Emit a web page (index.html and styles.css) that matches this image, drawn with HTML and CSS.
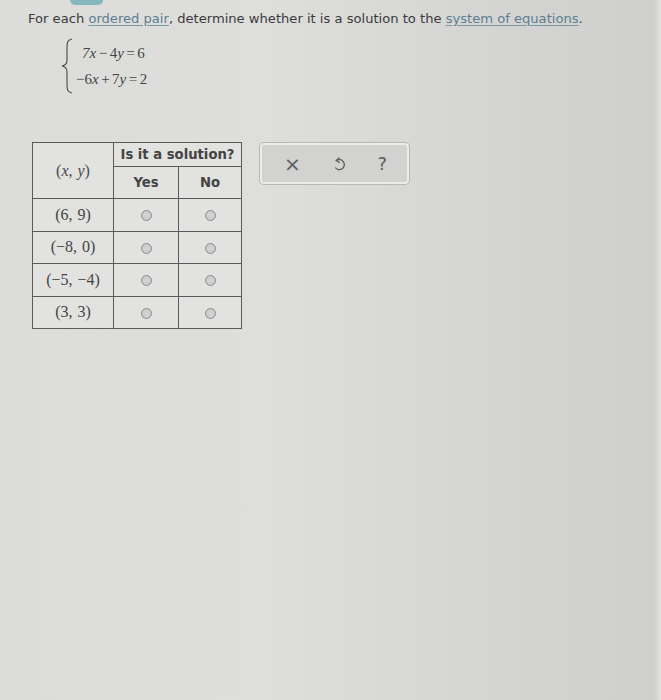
FILE: index.html
```html
<!DOCTYPE html>
<html>
<head>
<meta charset="utf-8">
<link rel="stylesheet" href="styles.css">
</head>
<body>
<div class="page">
  <div class="top-tab"></div>
  <p class="prompt">For each <a class="term">ordered pair</a>, determine whether it is a solution to the <a class="term">system of equations</a>.</p>
  <div class="system">
    <svg class="brace" width="12" height="56" viewBox="0 0 12 56">
      <path d="M11 1 C6 2 6 5 6 10 L6 22 C6 26 4 27.5 1 28 C4 28.5 6 30 6 34 L6 46 C6 51 6 54 11 55" fill="none" stroke="#4a4a4a" stroke-width="1.1"/>
    </svg>
    <div class="eqs">
      <div class="eq eq1"><i>7x</i><span class="op">−</span>4<i>y</i><span class="op">=</span>6</div>
      <div class="eq eq2">−6<i>x</i><span class="op">+</span>7<i>y</i><span class="op">=</span>2</div>
    </div>
  </div>
  <div class="work">
    <table class="grid">
      <tr>
        <th class="pair-head" rowspan="2"><span class="m">(<i>x</i>, <i>y</i>)</span></th>
        <th class="span-head" colspan="2">Is it a solution?</th>
      </tr>
      <tr class="yn">
        <th>Yes</th>
        <th>No</th>
      </tr>
      <tr><td class="m">(6, 9)</td><td><span class="radio"></span></td><td><span class="radio"></span></td></tr>
      <tr><td class="m">(−8, 0)</td><td><span class="radio"></span></td><td><span class="radio"></span></td></tr>
      <tr><td class="m">(−5, −4)</td><td><span class="radio"></span></td><td><span class="radio"></span></td></tr>
      <tr><td class="m">(3, 3)</td><td><span class="radio"></span></td><td><span class="radio"></span></td></tr>
    </table>
    <div class="tools">
      <span class="tool x">×</span>
      <svg class="tool undo" width="14" height="16" viewBox="0 0 14 16">
        <path d="M4.5 4.5 A5 5 0 1 1 3.2 11.5" fill="none" stroke="#5e5e5e" stroke-width="1.3"/>
        <path d="M7.5 1.5 L4.2 4.6 L7.8 6.8" fill="none" stroke="#5e5e5e" stroke-width="1.3"/>
      </svg>
      <span class="tool q">?</span>
    </div>
  </div>
</div>
</body>
</html>
```

FILE: styles.css
```css
html, body {
  margin: 0;
  padding: 0;
}
body {
  width: 661px;
  height: 700px;
  overflow: hidden;
  background: linear-gradient(90deg, #dcdcda 0%, #dededc 40%, #d3d3d1 80%, #cfcfcd 99%, #e2e2e0 100%);
  font-family: "DejaVu Sans", Verdana, sans-serif;
  color: #3b3b3b;
}
.page {
  position: relative;
  height: 700px;
}
.top-tab {
  margin-left: 70px;
  width: 33px;
  height: 5px;
  background: #86b7ba;
  border-radius: 0 0 14px 14px;
}
.prompt {
  margin: 4px 0 0 28px;
  font-size: 13.1px;
  line-height: 20px;
  white-space: nowrap;
}
.term {
  color: #5b7f90;
  text-decoration: underline;
  text-decoration-color: #7a98a6;
  text-underline-offset: 2px;
}
.system {
  display: flex;
  align-items: center;
  margin: 9px 0 0 61px;
  height: 56px;
}
.brace {
  display: block;
}
.eqs {
  display: flex;
  flex-direction: column;
  gap: 7px;
  font-family: "Liberation Serif", "Times New Roman", serif;
  font-size: 15px;
  color: #444;
}
.eq { line-height: 19px; }
.op { margin: 0 2.5px; }
.eq1 { margin-left: 9px; }
.eq2 { margin-left: 3px; }
.work {
  display: flex;
  align-items: flex-start;
  gap: 18px;
  margin: 48px 0 0 32px;
}
.grid {
  border-collapse: collapse;
  border: 1.5px solid #5a5a5a;
  background: #e2e2e0;
}
.grid th, .grid td {
  border: 1.5px solid #5a5a5a;
  padding: 0;
  text-align: center;
  color: #444;
}
.grid th {
  font-family: "DejaVu Sans", Verdana, sans-serif;
  font-weight: bold;
  font-size: 13.2px;
}
.pair-head {
  width: 80px;
  font-weight: normal !important;
}
.span-head {
  height: 23px;
}
.yn th {
  height: 31px;
  width: 64px;
}
.yn th + th { width: 62px; }
.grid td { height: 31.5px; }
.m {
  font-family: "Liberation Serif", "Times New Roman", serif;
  font-size: 16px;
  font-weight: normal;
  color: #4a4a4a;
  word-spacing: 1px;
}
.radio {
  display: inline-block;
  width: 9px;
  height: 9px;
  border-radius: 50%;
  border: 1.5px solid #8f8f8f;
  background: radial-gradient(circle, #d6d6d6 0%, #c3c3c3 100%);
  vertical-align: middle;
}
.tools {
  display: flex;
  align-items: center;
  justify-content: space-between;
  box-sizing: border-box;
  width: 149px;
  height: 41px;
  margin-top: 1px;
  padding: 0 20px 0 22px;
  border: 2px solid #ececea;
  border-radius: 4px;
  background: #d2d2d0;
  box-shadow: 0 0 0 1px #b8b8b6;
}
.tool {
  color: #5e5e5e;
}
.x {
  font-size: 20px;
  line-height: 20px;
  font-family: "DejaVu Sans", sans-serif;
}
.q {
  font-size: 18px;
  line-height: 20px;
  font-family: "DejaVu Sans", sans-serif;
}
.undo { display: block; }
```
